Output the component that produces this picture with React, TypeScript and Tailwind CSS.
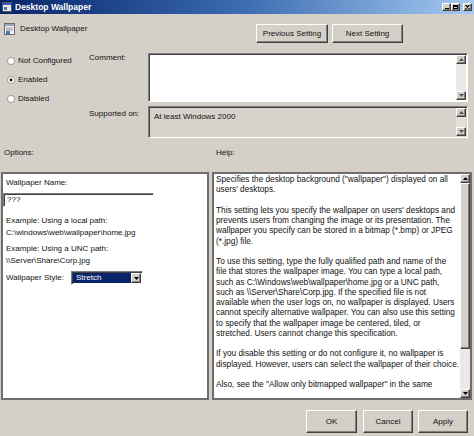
import React from "react";

const raised =
  "bg-[#d4d0c8] border border-t-white border-l-white border-b-[#404040] border-r-[#404040] shadow-[inset_-1px_-1px_0_#808080]";
const sunken =
  "border border-t-[#808080] border-l-[#808080] border-b-white border-r-white shadow-[inset_1px_1px_0_#404040]";

function Arrow({ dir, color = "#000" }: { dir: "up" | "down"; color?: string }) {
  return (
    <svg width="5" height="3" viewBox="0 0 5 3">
      {dir === "up" ? <path d="M2.5 0L5 3H0Z" fill={color} /> : <path d="M0 0H5L2.5 3Z" fill={color} />}
    </svg>
  );
}

function ScrollBtn({ dir, color }: { dir: "up" | "down"; color?: string }) {
  return (
    <div className={`${raised} w-[10px] h-[9px] flex items-center justify-center shrink-0`}>
      <Arrow dir={dir} color={color} />
    </div>
  );
}

function Radio({ label, checked }: { label: string; checked?: boolean }) {
  return (
    <div className="flex items-center gap-[3px] h-[10px]">
      <svg width="8" height="8" viewBox="0 0 12 12">
        <circle cx="6" cy="6" r="5.4" fill="#fff" stroke="#8a8a8a" strokeWidth="1.2" />
        {checked && <circle cx="6" cy="6" r="2.2" fill="#111" />}
      </svg>
      <span>{label}</span>
    </div>
  );
}

function Btn({ label, w, h }: { label: string; w: string; h: string }) {
  return <div className={`${raised} ${w} ${h} flex items-center justify-center`}>{label}</div>;
}

const help: string[][] = [
  ['Specifies the desktop background ("wallpaper") displayed on all', "users' desktops."],
  [
    "This setting lets you specify the wallpaper on users' desktops and",
    "prevents users from changing the image or its presentation. The",
    "wallpaper you specify can be stored in a bitmap (*.bmp) or JPEG",
    "(*.jpg) file.",
  ],
  [
    "To use this setting, type the fully qualified path and name of the",
    "file that stores the wallpaper image. You can type a local path,",
    "such as C:\\Windows\\web\\wallpaper\\home.jpg or a UNC path,",
    "such as \\\\Server\\Share\\Corp.jpg. If the specified file is not",
    "available when the user logs on, no wallpaper is displayed. Users",
    "cannot specify alternative wallpaper. You can also use this setting",
    "to specify that the wallpaper image be centered, tiled, or",
    "stretched. Users cannot change this specification.",
  ],
  [
    "If you disable this setting or do not configure it, no wallpaper is",
    "displayed. However, users can select the wallpaper of their choice.",
  ],
  ['Also, see the "Allow only bitmapped wallpaper" in the same'],
];

export default function App() {
  return (
    <div
      className="w-[474px] h-[436px] bg-[#d4d0c8] overflow-hidden flex flex-col text-[8px] leading-[10px] text-[#111]"
      style={{ fontFamily: '"Liberation Sans", Arial, sans-serif' }}
    >
      {/* title bar */}
      <div className="h-[14px] shrink-0 flex items-center pl-[2px] pr-[2px] bg-gradient-to-r from-[#0a246a] via-[#3a6ab0] to-[#a6caf0]">
        <svg width="10" height="10" viewBox="0 0 10 10">
          <rect x="0.5" y="0.5" width="9" height="9" fill="#e8e8e8" stroke="#555" />
          <rect x="1" y="1" width="8" height="2" fill="#2a5bd0" />
          <rect x="2" y="5" width="3" height="3" fill="#3b7be0" />
        </svg>
        <span className="ml-[3px] text-white font-bold text-[8.5px]">Desktop Wallpaper</span>
        <div className="ml-auto flex items-center">
          <div className={`${raised} w-[9px] h-[8px] flex items-end justify-center pb-[1px]`}>
            <div className="w-[4px] h-[1px] bg-black" />
          </div>
          <div className={`${raised} w-[9px] h-[8px] flex items-center justify-center`}>
            <div className="w-[5px] h-[4px] border border-black border-t-2" />
          </div>
          <div className={`${raised} w-[9px] h-[8px] ml-[3px] flex items-center justify-center`}>
            <svg width="5" height="4" viewBox="0 0 5 4">
              <path d="M0.5 0L4.5 4M4.5 0L0.5 4" stroke="#000" strokeWidth="1.1" />
            </svg>
          </div>
        </div>
      </div>

      {/* header row */}
      <div className="flex items-start mt-[10px] h-[19px] shrink-0">
        <div className="flex items-center gap-[5px] pl-[4px] h-[12px] -mt-[1px]">
          <svg width="11" height="12" viewBox="0 0 11 12">
            <rect x="0.5" y="0.5" width="10" height="11" fill="#f4f4f4" stroke="#6a6a6a" />
            <rect x="1" y="1" width="9" height="2" fill="#9aa7b8" />
            <path d="M2 5H9M2 7H9" stroke="#8a8a8a" />
            <rect x="2" y="8" width="4" height="3" fill="#4a78c0" />
          </svg>
          <span>Desktop Wallpaper</span>
        </div>
        <div className="ml-auto mr-[71px] flex gap-[4px]">
          <Btn label="Previous Setting" w="w-[72px]" h="h-[19px]" />
          <Btn label="Next Setting" w="w-[71px]" h="h-[19px]" />
        </div>
      </div>

      {/* state + comment */}
      <div className="flex mt-[10px] shrink-0">
        <div className="w-[89px] pl-[7px] pt-[3px] flex flex-col gap-[9px]">
          <Radio label="Not Configured" />
          <Radio label="Enabled" checked />
          <Radio label="Disabled" />
        </div>
        <div className="flex flex-col">
          <div className="flex">
            <div className="w-[59px]">Comment:</div>
            <div className={`${sunken} w-[320px] h-[49px] bg-white flex justify-end p-[1px]`}>
              <div className="w-[10px] flex flex-col bg-[#ebe9e5]">
                <ScrollBtn dir="up" color="#555" />
                <div className="flex-1" />
                <ScrollBtn dir="down" color="#555" />
              </div>
            </div>
          </div>
          <div className="flex mt-[4px]">
            <div className="w-[59px] pt-[3px]">Supported on:</div>
            <div className={`${sunken} w-[320px] h-[32px] bg-[#d7d3cb] flex p-[1px]`}>
              <div className="flex-1 pl-[4px] pt-[4px]">At least Windows 2000</div>
              <div className="w-[10px] flex flex-col bg-[#e3e0da]">
                <ScrollBtn dir="up" color="#555" />
                <div className="flex-1" />
                <ScrollBtn dir="down" color="#555" />
              </div>
            </div>
          </div>
        </div>
      </div>

      {/* section labels */}
      <div className="flex mt-[10px] h-[10px] shrink-0">
        <div className="w-[216px] pl-[4px]">Options:</div>
        <div>Help:</div>
      </div>

      {/* panels */}
      <div className="flex mt-[14px] pl-[1px] gap-[3px] h-[228px] shrink-0">
        <div className="w-[208px] h-full border-2 border-[#6e6e6e] bg-white flex flex-col">
          <div className="pl-[3px] pt-[4px]">Wallpaper Name:</div>
          <div className={`${sunken} w-[151px] h-[14px] mt-[5px] bg-white flex items-center pl-[3px]`}>???</div>
          <div className="pl-[3px] mt-[8px] leading-[12px]">
            <div>Example: Using a local path:</div>
            <div>C:\windows\web\wallpaper\home.jpg</div>
            <div className="mt-[4px]">Example: Using a UNC path:</div>
            <div>\\Server\Share\Corp.jpg</div>
          </div>
          <div className="flex items-center mt-[4px]">
            <div className="w-[68px] pl-[3px]">Wallpaper Style:</div>
            <div className={`${sunken} w-[72px] h-[14px] bg-white flex p-[1px]`}>
              <div className="flex-1 bg-[#0a246a] text-white flex items-center pl-[3px]">Stretch</div>
              <div className={`${raised} w-[10px] flex items-center justify-center`}>
                <Arrow dir="down" />
              </div>
            </div>
          </div>
        </div>
        <div className="w-[260px] h-full border-2 border-[#6e6e6e] bg-white flex">
          <div className="flex-1 overflow-hidden pl-[2px] pt-[1px] text-[8.25px] leading-[10.25px] whitespace-nowrap">
            {help.map((p, i) => (
              <div key={i} className={i > 0 ? "mt-[10.25px]" : ""}>
                {p.map((l, j) => (
                  <div key={j}>{l}</div>
                ))}
              </div>
            ))}
          </div>
          <div className="w-[10px] flex flex-col bg-[#ebe9e5]">
            <ScrollBtn dir="up" />
            <div className={`${raised} h-[166px] shrink-0`} />
            <div className="flex-1" />
            <ScrollBtn dir="down" />
          </div>
        </div>
      </div>

      {/* bottom buttons */}
      <div className="flex justify-end mt-[10px] pr-[6px] shrink-0">
        <Btn label="OK" w="w-[51px]" h="h-[23px]" />
        <div className="w-[6px]" />
        <Btn label="Cancel" w="w-[50px]" h="h-[23px]" />
        <div className="w-[5px]" />
        <Btn label="Apply" w="w-[50px]" h="h-[23px]" />
      </div>
    </div>
  );
}
